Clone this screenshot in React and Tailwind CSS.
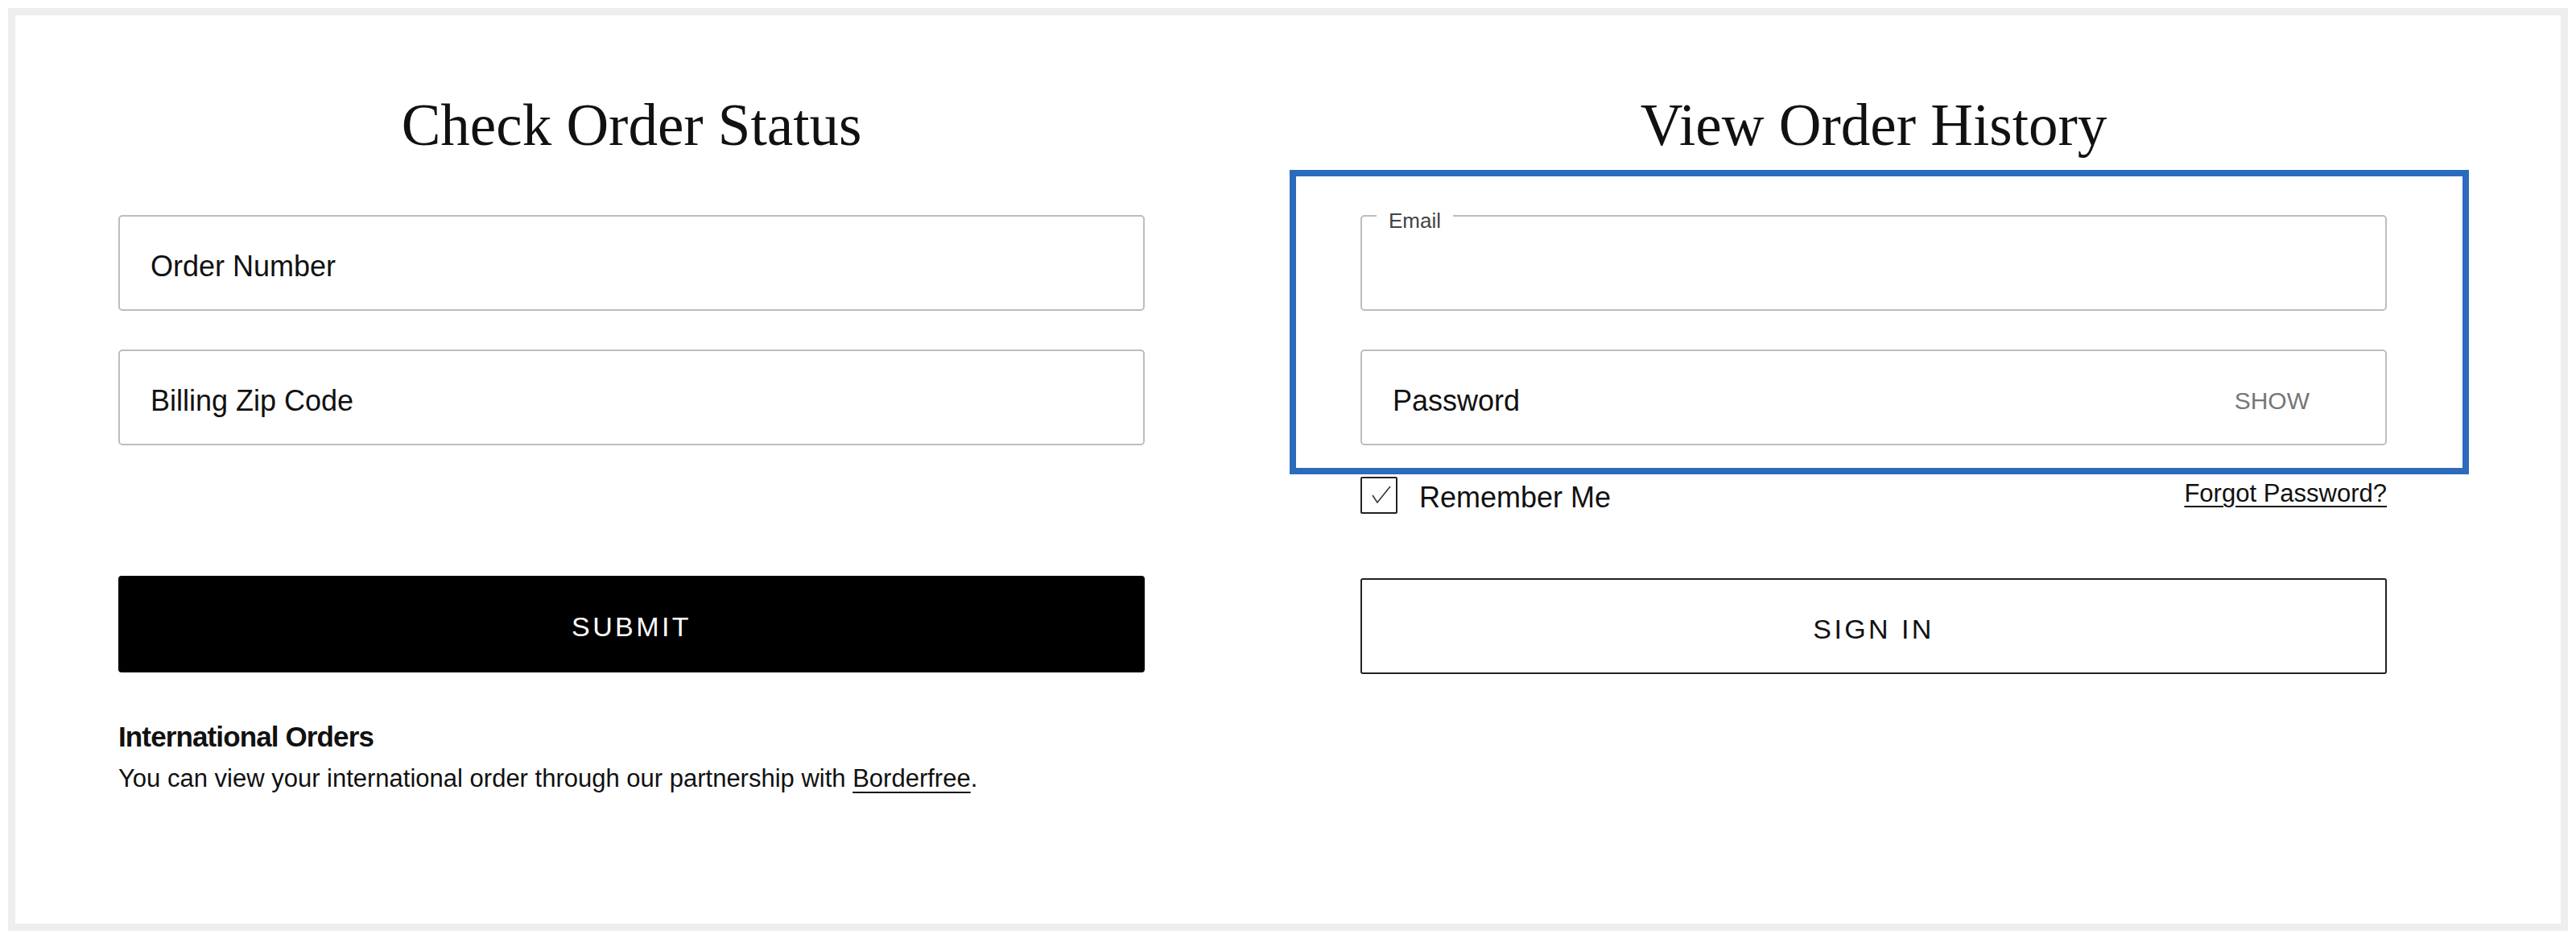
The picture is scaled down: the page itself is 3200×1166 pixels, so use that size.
import React from 'react';

const sans = { fontFamily: '"Liberation Sans", Arial, sans-serif' };

function TextField({ label, children, legend }) {
  return (
    <div className="relative flex h-[119px] items-center justify-between rounded-[5px] border-2 border-[#bdbdbd] bg-white pl-[38px] pr-[94px] pt-[8px]">
      {legend && (
        <span className="absolute left-[18px] top-[-8px] bg-white px-[15px] text-[26px] leading-none text-[#444]">
          {legend}
        </span>
      )}
      {label && <span className="text-[36px] leading-none text-[#111]">{label}</span>}
      {children}
    </div>
  );
}

function Heading({ children }) {
  return (
    <h2
      className="mb-[75px] text-center text-[73px] font-normal leading-none text-[#111]"
      style={{ fontFamily: '"Liberation Serif", "Times New Roman", serif' }}
    >
      {children}
    </h2>
  );
}

function CheckOrderStatus() {
  return (
    <section className="w-[1275px]">
      <Heading>Check Order Status</Heading>
      <div className="flex flex-col gap-[48px]">
        <TextField label="Order Number" />
        <TextField label="Billing Zip Code" />
      </div>

      <button className="mt-[162px] flex h-[120px] w-full items-center justify-center rounded-[4px] bg-black pt-[6px] text-[34px] leading-none tracking-[0.1em] text-white">
        SUBMIT
      </button>

      <h3 className="mt-[62px] text-[35px] font-bold leading-none tracking-tight text-[#111]">International Orders</h3>
      <p className="mt-[19px] text-[31px] leading-none text-[#111]">
        You can view your international order through our partnership with{' '}
        <a className="underline decoration-2 underline-offset-[6px]">Borderfree</a>.
      </p>
    </section>
  );
}

function ViewOrderHistory() {
  return (
    <section className="relative w-[1275px]">
      <Heading>View Order History</Heading>
      <div className="flex flex-col gap-[48px]">
        <TextField legend="Email" />
        <TextField label="Password">
          <span className="text-[30px] leading-none text-[#777]">SHOW</span>
        </TextField>
      </div>

      {/* annotation frame drawn over the sign-in fields */}
      <div className="pointer-events-none absolute left-[-88px] top-[92px] h-[378px] w-[1465px] border-[8px] border-[#2c6bbb]" />

      <div className="mt-[39px] flex h-[46px] items-start justify-between">
        <label className="flex items-start gap-[27px]">
          <span className="flex h-[46px] w-[46px] items-center justify-center rounded-[2px] border-2 border-[#222]">
            <svg width="46" height="46" viewBox="0 0 46 46" className="shrink-0 -m-[2px]">
              <polyline points="15,23 21,32 37,12" fill="none" stroke="#333" strokeWidth="1.6" />
            </svg>
          </span>
          <span className="mt-[8px] text-[36px] leading-none text-[#111]">Remember Me</span>
        </label>
        <a className="mt-[5px] text-[31px] leading-none text-[#111] underline decoration-2 underline-offset-[5px]">
          Forgot Password?
        </a>
      </div>

      <button className="mt-[80px] flex h-[119px] w-full items-center justify-center rounded-[3px] border-2 border-[#222] bg-white pt-[6px] text-[34px] leading-none tracking-[0.1em] text-[#111]">
        SIGN IN
      </button>
    </section>
  );
}

export default function App() {
  return (
    <div className="h-[1166px] w-[3200px] bg-white p-[10px]" style={sans}>
      <div className="flex h-[1146px] gap-[268px] border-[9px] border-[#eeeeee] bg-white pl-[128px] pt-[100px]">
        <CheckOrderStatus />
        <ViewOrderHistory />
      </div>
    </div>
  );
}
